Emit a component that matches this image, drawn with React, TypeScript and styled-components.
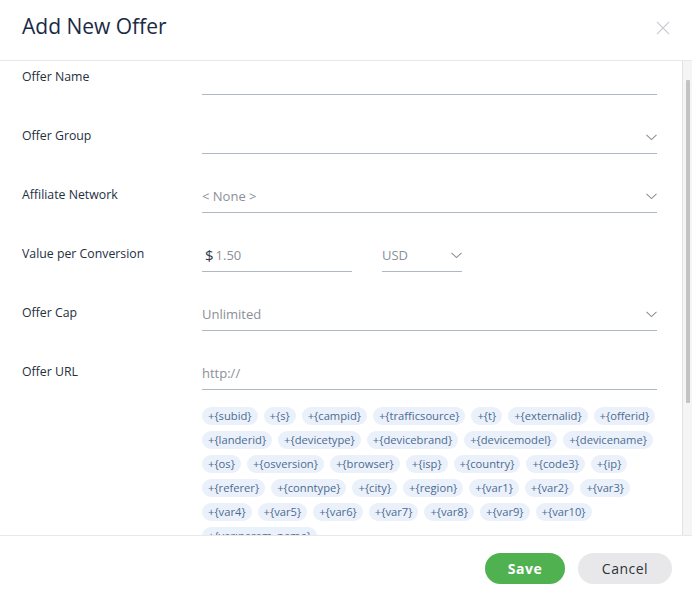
import React from "react";
import styled, { createGlobalStyle } from "styled-components";

const Global = createGlobalStyle`
  html, body { margin: 0; padding: 0; background: #fff; }
  body { font-family: "Open Sans", "Liberation Sans", sans-serif; }
  * { box-sizing: border-box; }
`;

const Modal = styled.div`
  width: 692px;
  height: 596px;
  display: flex;
  flex-direction: column;
  background: #fff;
  overflow: hidden;
`;

const Header = styled.div`
  height: 61px;
  flex: none;
  display: flex;
  align-items: flex-start;
  justify-content: space-between;
  padding: 13px 22px 0 22px;
  border-bottom: 1px solid #e6e8eb;
`;

const Title = styled.h1`
  margin: 0;
  font-size: 21px;
  line-height: 26px;
  font-weight: 400;
  color: #1a2a46;
`;

const Close = styled.button`
  border: 0;
  background: transparent;
  padding: 0;
  margin-top: 8px;
  width: 14px;
  height: 14px;
  cursor: pointer;
  display: flex;
`;

const BodyWrap = styled.div`
  flex: 1;
  min-height: 0;
  display: flex;
`;

const Body = styled.div`
  flex: 1;
  min-width: 0;
  overflow: hidden;
  padding: 0 25px 0 22px;
`;

const ScrollTrack = styled.div`
  width: 10px;
  flex: none;
  background: #f5f5f5;
  border-left: 1px solid #e2e2e2;
  padding: 19px 2px 0 3px;
`;

const ScrollThumb = styled.div`
  height: 323px;
  background: #c3c3c3;
  border-radius: 1px;
`;

const Row = styled.div`
  display: grid;
  grid-template-columns: 180px 1fr;
  margin-bottom: 25px;
`;

const Label = styled.div`
  padding-top: 7px;
  font-size: 12.3px;
  line-height: 18px;
  color: #24303f;
`;

const FieldGroup = styled.div`
  display: flex;
  gap: 30px;
`;

const Field = styled.div<{ $width?: number }>`
  height: 34px;
  display: flex;
  align-items: center;
  ${(p) => (p.$width ? `width: ${p.$width}px; flex: none;` : `flex: 1;`)}
  border-bottom: 1px solid #aeb8c3;
  font-size: 13px;
  color: #8b9098;
  padding-top: 1px;
`;

const FieldText = styled.span<{ $muted?: boolean }>`
  flex: 1;
  color: ${(p) => (p.$muted ? "#8b9098" : "#2f3a47")};
`;

const Currency = styled.span`
  color: #2f3a47;
  font-size: 15px;
  margin: 0 2px 0 3px;
`;

const Chevron = () => (
  <svg width="11" height="7" viewBox="0 0 11 7" style={{ flex: "none" }}>
    <path d="M0.5 0.8 L5.5 5.6 L10.5 0.8" fill="none" stroke="#8a9099" strokeWidth="1.1" />
  </svg>
);

const Tags = styled.div`
  grid-column: 2;
  display: flex;
  flex-wrap: wrap;
  gap: 6px 6px;
  margin-top: 17px;
`;

const Tag = styled.span`
  height: 18px;
  line-height: 18px;
  padding: 0 6px;
  border-radius: 9px;
  background: #ebf1fa;
  color: #4c6b92;
  font-size: 11.2px;
  white-space: nowrap;
`;

const Footer = styled.div`
  height: 61px;
  flex: none;
  border-top: 1px solid #e6e8eb;
  display: flex;
  justify-content: flex-end;
  align-items: flex-start;
  gap: 13px;
  padding: 17px 20px 0 0;
`;

const Button = styled.button<{ $primary?: boolean }>`
  height: 31px;
  border: 0;
  border-radius: 16px;
  font-family: "Open Sans", "Liberation Sans", sans-serif;
  font-size: 14px;
  letter-spacing: 0.5px;
  cursor: pointer;
  width: ${(p) => (p.$primary ? 80 : 94)}px;
  background: ${(p) => (p.$primary ? "#50b150" : "#e8e8ea")};
  color: ${(p) => (p.$primary ? "#fff" : "#2e3440")};
  font-weight: ${(p) => (p.$primary ? 700 : 400)};
`;

const tokens = [
  "subid", "s", "campid", "trafficsource", "t", "externalid", "offerid",
  "landerid", "devicetype", "devicebrand", "devicemodel", "devicename",
  "os", "osversion", "browser", "isp", "country", "code3", "ip",
  "referer", "conntype", "city", "region", "var1", "var2", "var3",
  "var4", "var5", "var6", "var7", "var8", "var9", "var10",
  "var:param_name",
];

export default function App() {
  return (
    <Modal>
      <Global />
      <Header>
        <Title>Add New Offer</Title>
        <Close aria-label="Close">
          <svg width="14" height="14" viewBox="0 0 14 14">
            <path d="M1 1 L13 13 M13 1 L1 13" stroke="#c9cdd2" strokeWidth="1.1" fill="none" />
          </svg>
        </Close>
      </Header>
      <BodyWrap>
        <Body>
          <Row>
            <Label>Offer Name</Label>
            <Field />
          </Row>
          <Row>
            <Label>Offer Group</Label>
            <Field>
              <FieldText />
              <Chevron />
            </Field>
          </Row>
          <Row>
            <Label>Affiliate Network</Label>
            <Field>
              <FieldText $muted>&lt; None &gt;</FieldText>
              <Chevron />
            </Field>
          </Row>
          <Row>
            <Label>Value per Conversion</Label>
            <FieldGroup>
              <Field $width={150}>
                <Currency>$</Currency>
                <FieldText $muted>1.50</FieldText>
              </Field>
              <Field $width={80}>
                <FieldText $muted>USD</FieldText>
                <Chevron />
              </Field>
            </FieldGroup>
          </Row>
          <Row>
            <Label>Offer Cap</Label>
            <Field>
              <FieldText $muted>Unlimited</FieldText>
              <Chevron />
            </Field>
          </Row>
          <Row>
            <Label>Offer URL</Label>
            <Field>
              <FieldText $muted>http://</FieldText>
            </Field>
            <Tags>
              {tokens.map((t) => (
                <Tag key={t}>+{"{"}{t}{"}"}</Tag>
              ))}
            </Tags>
          </Row>
        </Body>
        <ScrollTrack aria-hidden>
          <ScrollThumb />
        </ScrollTrack>
      </BodyWrap>
      <Footer>
        <Button $primary>Save</Button>
        <Button>Cancel</Button>
      </Footer>
    </Modal>
  );
}
